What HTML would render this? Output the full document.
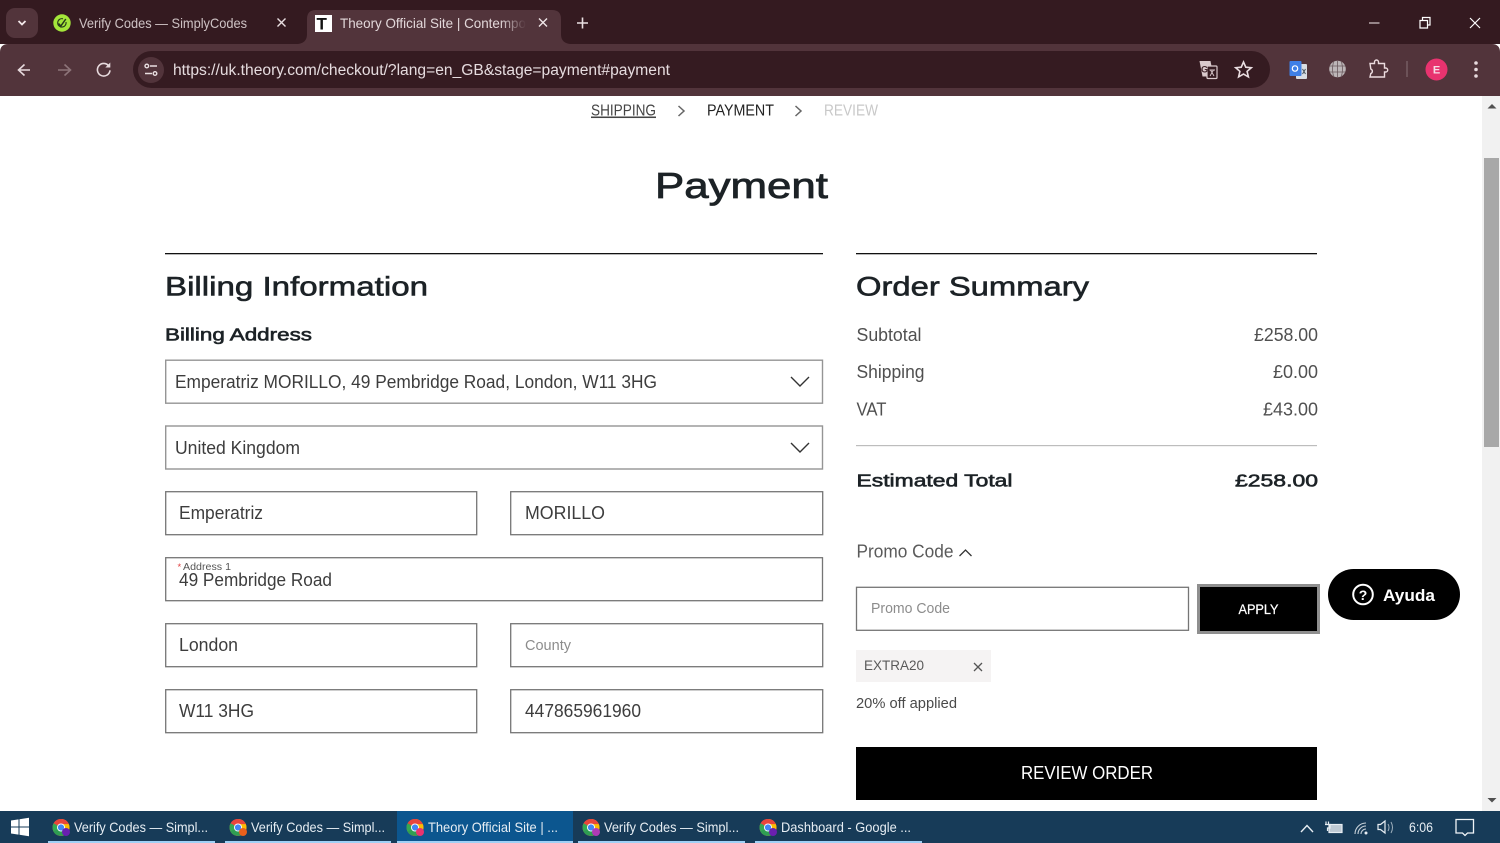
<!DOCTYPE html>
<html lang="en"><head><meta charset="utf-8"><title>Payment</title>
<style>
html,body{margin:0;padding:0;width:1500px;height:843px;overflow:hidden;background:#fff}
svg{display:block}
text{font-family:"Liberation Sans",sans-serif;white-space:pre}
.t{fill:#e3d8da;font-size:14px}
.b{fill:#3d3d3d;font-size:18px}
.h{fill:#1c2226;stroke:#1c2226;stroke-width:.6px}
.tb{fill:#e6edf3;font-size:14px}
.box{fill:#fff;stroke:#757575;stroke-width:1.3}
.sel{fill:#fff;stroke:#959595;stroke-width:1.4}
</style></head><body>
<svg width="1500" height="843" viewBox="0 0 1500 843" xmlns="http://www.w3.org/2000/svg">
<defs>
<g id="chrome"><circle r="8.5" fill="#e8453c"/><path d="M0 0L-7.4-4.2A8.5 8.5 0 0 0 -4 7.5Z" fill="#34a853"/><path d="M0-8.5A8.5 8.5 0 0 1 7.4 4.2L0 0Z" fill="#fbbc05"/><path d="M-7.4 4A8.5 8.5 0 0 0 7.4 4.2L0 0Z" fill="#2f9e52"/><path d="M-7.4-4.2A8.5 8.5 0 0 1 7.8-3.4H0Z" fill="#e8453c"/><circle r="4" fill="#fff"/><circle r="3.1" fill="#4285f4"/></g>
<linearGradient id="fade" x1="0" x2="1" y1="0" y2="0"><stop offset="0" stop-color="#52343b" stop-opacity="0"/><stop offset="1" stop-color="#52343b"/></linearGradient>
</defs>
<rect width="1500" height="843" fill="#fff"/>

<!-- Chrome title bar -->
<rect width="1500" height="44" fill="#341a20"/>
<rect x="6" y="8" width="32" height="30" rx="9" fill="#52343b"/>
<path d="M18.500 21l3.500 3.500 3.500-3.500" fill="none" stroke="#f3e8ea" stroke-width="1.800"/>
<circle cx="62" cy="23" r="8.700" fill="#a4e63a"/>
<path d="M58.500 23.500l2.300 2.500 5-7" fill="none" stroke="#26391a" stroke-width="1.500"/><path d="M66 22a4.200 4.200 0 1 1-3-3.200" fill="none" stroke="#26391a" stroke-width="1.100"/>
<text class="t" x="79" y="28" textLength="168" lengthAdjust="spacingAndGlyphs" fill-opacity=".88">Verify Codes — SimplyCodes</text>
<path d="M277.500 18.500l8 8m0-8l-8 8" stroke="#e9dfe1" stroke-width="1.400"/>
<path d="M296 44c8 0 11-4 11-10V19c0-6 3-9 9-9h236c6 0 9 3 9 9v15c0 6 3 10 11 10Z" fill="#52343b"/>
<rect x="315" y="15" width="17" height="17" fill="#fff"/>
<text x="316.500" y="29.500" style="font-size:17px;font-weight:bold;fill:#111">T</text>
<text class="t" x="340" y="28" textLength="186" lengthAdjust="spacingAndGlyphs">Theory Official Site | Contempo</text>
<rect x="500" y="12" width="26" height="24" fill="url(#fade)"/>
<path d="M539 18.500l8 8m0-8l-8 8" stroke="#f0e6e8" stroke-width="1.400"/>
<path d="M582.500 17.500v11m-5.500-5.500h11" stroke="#e9dfe1" stroke-width="1.600"/>
<path d="M1369 23h10.500" stroke="#d8ccce" stroke-width="1.200"/>
<path d="M1420 20.500h7.500v7.500h-7.500Z" fill="none" stroke="#fff" stroke-width="1.200"/><path d="M1422.500 20v-2.500h7.500v7.500h-2.500" fill="none" stroke="#fff" stroke-width="1.200"/>
<path d="M1470 18l10 10m0-10l-10 10" stroke="#fff" stroke-width="1.200"/>

<!-- Toolbar -->
<path d="M0 96V52c0-5 3-8 8-8h288v0h286h910c5 0 8 3 8 8v44Z" fill="#52343b"/>
<rect x="133" y="51" width="1137" height="37" rx="18.500" fill="#351b21"/>
<circle cx="151" cy="70" r="13" fill="#52343b"/>
<path d="M18 70h12m-5.500-5.500l-6 5.500 6 5.500" fill="none" stroke="#e7dadd" stroke-width="1.600"/>
<path d="M58 70h12m-5.500-5.500l6 5.500-6 5.500" fill="none" stroke="#8d7479" stroke-width="1.600"/>
<path d="M109 66.300a6.300 6.300 0 1 0 1 4" fill="none" stroke="#e7dadd" stroke-width="1.600"/><path d="M110.300 62.500v5h-5Z" fill="#e7dadd"/>
<g fill="none" stroke="#e9dfe1" stroke-width="1.400"><path d="M150 66h7M145 73.500h7"/><circle cx="146.800" cy="66" r="1.800"/><circle cx="155" cy="73.500" r="1.800"/></g>
<text x="173" y="75" textLength="497" lengthAdjust="spacingAndGlyphs" style="font-size:15.500px;fill:#e6dcdf">https://uk.theory.com/checkout/?lang=en_GB&amp;stage=payment#payment</text>
<!-- translate -->
<path d="M1199.500 61h11l3 15.500h-11Z" fill="#d9c9cc"/><rect x="1207" y="66" width="10" height="12.500" rx="1" fill="#351b21" stroke="#d9c9cc" stroke-width="1.200"/>
<text x="1201" y="72.500" style="font-size:9px;font-weight:bold;fill:#44292f">G</text>
<path d="M1209.500 70h5.500m-4.500 0l3.500 6m-.5-6l-3.500 6" stroke="#d9c9cc" stroke-width=".9" fill="none"/>
<path d="M1243.500 62l2.300 5.200 5.500.5-4.200 3.700 1.300 5.500-4.900-2.900-4.900 2.900 1.300-5.500-4.200-3.700 5.500-.5Z" fill="none" stroke="#e9dde0" stroke-width="1.600"/>
<rect x="1296" y="64" width="11" height="15" rx="1" fill="#d9dde3"/><rect x="1289.500" y="61" width="12" height="15" rx="1" fill="#3f7fe6"/>
<circle cx="1295" cy="68.500" r="2.700" fill="none" stroke="#fff" stroke-width="1.200"/><path d="M1302.500 69l3 5m0-5l-3 5" stroke="#46535e" stroke-width="1"/>
<circle cx="1337.500" cy="69" r="8.300" fill="#bdb6b8"/><path d="M1329.500 66h16M1329.500 72h16M1337.500 61v16M1333.500 62q-2 7 0 14M1341.500 62q2 7 0 14" fill="none" stroke="#6b5a5e" stroke-width=".8"/>
<path d="M1370 63.500h4.500v-1.500a2 2 0 0 1 4 0v1.500h6v4.500h1.200a2 2 0 0 1 0 4h-1.200v5h-14.500l.8-3.500a2.400 2.400 0 0 0 0-4.500Z" fill="none" stroke="#ecdcdf" stroke-width="1.400"/>
<path d="M1407 61v16" stroke="#7a6268" stroke-width="1.300"/>
<circle cx="1436.500" cy="69.500" r="11" fill="#e8336f"/>
<text x="1436.500" y="73.500" text-anchor="middle" style="font-size:11px;fill:#f7dce6;font-weight:bold">E</text>
<g fill="#e7dadd"><circle cx="1476" cy="63" r="1.800"/><circle cx="1476" cy="69.500" r="1.800"/><circle cx="1476" cy="76" r="1.800"/></g>

<!-- Scrollbar -->
<rect x="1482" y="96" width="18" height="715" fill="#f1f1f1"/>
<rect x="1484" y="158" width="15" height="289" fill="#a8a8a8"/>
<path d="M1487.500 108.500l4.500-4.500 4.500 4.500Z" fill="#505050"/>
<path d="M1487.500 798l4.500 4.500 4.500-4.500Z" fill="#505050"/>

<!-- Breadcrumb -->
<text x="591" y="115.500" textLength="65" lengthAdjust="spacingAndGlyphs" style="font-size:15.500px;fill:#444" text-decoration="underline">SHIPPING</text>
<path d="M678.500 106l5.500 5-5.500 5" fill="none" stroke="#666" stroke-width="1.500"/>
<text x="707" y="115.500" textLength="67" lengthAdjust="spacingAndGlyphs" style="font-size:15.500px;fill:#222">PAYMENT</text>
<path d="M795.500 106l5.500 5-5.500 5" fill="none" stroke="#666" stroke-width="1.500"/>
<text x="824" y="115.500" textLength="54" lengthAdjust="spacingAndGlyphs" style="font-size:15.500px;fill:#c8c8c8">REVIEW</text>

<text class="h" x="655" y="198" textLength="173" lengthAdjust="spacingAndGlyphs" style="font-size:36px;stroke-width:.8px">Payment</text>

<!-- Billing -->
<rect x="165" y="253" width="658" height="1.300" fill="#111"/>
<text class="h" x="165" y="295.500" textLength="263" lengthAdjust="spacingAndGlyphs" style="font-size:27px">Billing Information</text>
<text class="h" x="165" y="340.500" textLength="147" lengthAdjust="spacingAndGlyphs" style="font-size:17.500px;stroke-width:.6px">Billing Address</text>

<rect class="sel" x="165.700" y="360.200" width="656.800" height="43"/>
<text class="b" x="175" y="388" textLength="482" lengthAdjust="spacingAndGlyphs">Emperatriz MORILLO, 49 Pembridge Road, London, W11 3HG</text>
<path d="M791 377l9 9 9-9" fill="none" stroke="#333" stroke-width="1.400"/>

<rect class="sel" x="165.700" y="426" width="656.800" height="43"/>
<text class="b" x="175" y="454" textLength="125" lengthAdjust="spacingAndGlyphs">United Kingdom</text>
<path d="M791 443l9 9 9-9" fill="none" stroke="#333" stroke-width="1.400"/>

<rect class="box" x="165.700" y="491.700" width="311" height="43"/>
<text class="b" x="179" y="519" textLength="84" lengthAdjust="spacingAndGlyphs">Emperatriz</text>
<rect class="box" x="510.700" y="491.700" width="312" height="43"/>
<text class="b" x="525" y="519" textLength="80" lengthAdjust="spacingAndGlyphs">MORILLO</text>

<rect class="box" x="165.700" y="557.700" width="656.800" height="43"/>
<text x="177.500" y="570" style="font-size:9.500px;fill:#e04040">*</text>
<text x="183" y="570" textLength="48" lengthAdjust="spacingAndGlyphs" style="font-size:10px;fill:#555">Address 1</text>
<text class="b" x="179" y="586" textLength="153" lengthAdjust="spacingAndGlyphs">49 Pembridge Road</text>

<rect class="box" x="165.700" y="623.700" width="311" height="43"/>
<text class="b" x="179" y="651" textLength="59" lengthAdjust="spacingAndGlyphs">London</text>
<rect class="box" x="510.700" y="623.700" width="312" height="43"/>
<text x="525" y="650" textLength="46" lengthAdjust="spacingAndGlyphs" style="font-size:15px;fill:#8c8c8c">County</text>

<rect class="box" x="165.700" y="689.700" width="311" height="43"/>
<text class="b" x="179" y="717" textLength="75" lengthAdjust="spacingAndGlyphs">W11 3HG</text>
<rect class="box" x="510.700" y="689.700" width="312" height="43"/>
<text class="b" x="525" y="717" textLength="116" lengthAdjust="spacingAndGlyphs">447865961960</text>

<!-- Order Summary -->
<rect x="856" y="253" width="461" height="1.300" fill="#111"/>
<text class="h" x="856" y="295.500" textLength="233" lengthAdjust="spacingAndGlyphs" style="font-size:27px">Order Summary</text>
<text class="b" x="856.500" y="341" textLength="65" lengthAdjust="spacingAndGlyphs" style="fill:#505050">Subtotal</text>
<text class="b" x="1254" y="341" textLength="64" lengthAdjust="spacingAndGlyphs" style="fill:#505050">£258.00</text>
<text class="b" x="856.500" y="378" textLength="68" lengthAdjust="spacingAndGlyphs" style="fill:#505050">Shipping</text>
<text class="b" x="1273" y="378" textLength="45" lengthAdjust="spacingAndGlyphs" style="fill:#505050">£0.00</text>
<text class="b" x="856.500" y="415.500" textLength="30" lengthAdjust="spacingAndGlyphs" style="fill:#505050">VAT</text>
<text class="b" x="1263" y="415.500" textLength="55" lengthAdjust="spacingAndGlyphs" style="fill:#505050">£43.00</text>
<rect x="856" y="445" width="461" height="1.200" fill="#bdbdbd"/>
<text class="h" x="856.500" y="486.500" textLength="156" lengthAdjust="spacingAndGlyphs" style="font-size:17.500px">Estimated Total</text>
<text class="h" x="1235" y="486.500" textLength="83" lengthAdjust="spacingAndGlyphs" style="font-size:17.500px">£258.00</text>

<text class="b" x="856.500" y="557.500" textLength="97" lengthAdjust="spacingAndGlyphs" style="fill:#5a5a5a">Promo Code</text>
<path d="M959.500 556l6-6 6 6" fill="none" stroke="#333" stroke-width="1.300"/>

<rect class="box" x="856.500" y="587.300" width="332" height="43"/>
<text x="871" y="613" textLength="79" lengthAdjust="spacingAndGlyphs" style="font-size:15px;fill:#8c8c8c">Promo Code</text>
<rect x="1198.500" y="585.500" width="120" height="47" fill="#000" stroke="#8f8f8f" stroke-width="3"/>
<text x="1238.500" y="614" textLength="40" lengthAdjust="spacingAndGlyphs" style="font-size:14px;fill:#fff;stroke:#fff;stroke-width:.25px">APPLY</text>

<rect x="856" y="650" width="135" height="32" fill="#f5f3f3"/>
<text x="864" y="670" textLength="60" lengthAdjust="spacingAndGlyphs" style="font-size:14px;fill:#5a5a5a">EXTRA20</text>
<path d="M974 663l8 8m0-8l-8 8" stroke="#555" stroke-width="1.300"/>
<text x="856" y="708" textLength="101" lengthAdjust="spacingAndGlyphs" style="font-size:14.500px;fill:#4a4a4a">20% off applied</text>

<rect x="856" y="747" width="461" height="53" fill="#000"/>
<text x="1021" y="779" textLength="132" lengthAdjust="spacingAndGlyphs" style="font-size:18.500px;fill:#fff">REVIEW ORDER</text>

<!-- Ayuda -->
<rect x="1328" y="569" width="132" height="51" rx="25.500" fill="#000"/>
<circle cx="1363" cy="594.500" r="9.800" fill="none" stroke="#fff" stroke-width="2"/>
<text x="1363" y="600" text-anchor="middle" style="font-size:14px;font-weight:bold;fill:#fff">?</text>
<text x="1383" y="601" textLength="52" lengthAdjust="spacingAndGlyphs" style="font-size:17px;font-weight:bold;fill:#fff">Ayuda</text>

<!-- Taskbar -->
<rect y="811" width="1500" height="32" fill="#173b58"/>
<rect x="397" y="811" width="176" height="32" fill="#0c568f"/>
<g fill="#fff"><path d="M11 820.500l7.500-1.100v7.100H11Z"/><path d="M19.500 819.200l9.500-1.400v8.700h-9.500Z"/><path d="M11 827.500h7.500v7.100l-7.500-1.100Z"/><path d="M19.500 827.500H29v8.700l-9.500-1.400Z"/></g>
<g fill="#9fd0f5"><rect x="48" y="841" width="167" height="2"/><rect x="225" y="841" width="166" height="2"/><rect x="397" y="841" width="176" height="2"/><rect x="578" y="841" width="167" height="2"/><rect x="755" y="841" width="167" height="2"/></g>
<use href="#chrome" x="61" y="827.500"/><circle cx="66" cy="832" r="4" fill="#6a1fb0"/>
<text class="tb" x="74" y="832" textLength="134" lengthAdjust="spacingAndGlyphs">Verify Codes — Simpl...</text>
<use href="#chrome" x="238" y="827.500"/><circle cx="243" cy="832" r="4" fill="#e8601c"/>
<text class="tb" x="251" y="832" textLength="134" lengthAdjust="spacingAndGlyphs">Verify Codes — Simpl...</text>
<use href="#chrome" x="415" y="827.500"/><circle cx="420" cy="832" r="4" fill="#e8336f"/>
<text class="tb" x="428" y="832" textLength="130" lengthAdjust="spacingAndGlyphs">Theory Official Site | ...</text>
<use href="#chrome" x="591" y="827.500"/><circle cx="596" cy="832" r="4" fill="#b03ab5"/>
<text class="tb" x="604" y="832" textLength="135" lengthAdjust="spacingAndGlyphs">Verify Codes — Simpl...</text>
<use href="#chrome" x="768" y="827.500"/><circle cx="773" cy="832" r="4" fill="#6a1fb0"/>
<text class="tb" x="781" y="832" textLength="130" lengthAdjust="spacingAndGlyphs">Dashboard - Google ...</text>

<path d="M1301 832l6-6.500 6 6.500" fill="none" stroke="#e8eef3" stroke-width="1.400"/>
<g fill="none" stroke="#e8eef3" stroke-width="1.200"><rect x="1329" y="824.500" width="13" height="8" fill="#e8eef3" fill-opacity=".8"/><path d="M1326 821.500v3m2.500-3v3M1325 824.500h5v3.500h-2.500v3"/></g>
<path d="M1355 834a11 11 0 0 1 11-11M1358 834a8 8 0 0 1 8-8M1361 834a5 5 0 0 1 5-5" fill="none" stroke="#c8d2da" stroke-width="1.100"/><circle cx="1366" cy="833" r="1.500" fill="#e8eef3"/>
<path d="M1378 824.500v5h2.500l4.500 3.500v-12l-4.500 3.500Z" fill="none" stroke="#e8eef3" stroke-width="1.200"/>
<path d="M1388 824q2 3.500 0 7M1391 822q3 5.500 0 11" fill="none" stroke="#9fb0bd" stroke-width="1"/>
<text class="tb" x="1409" y="832" textLength="24" lengthAdjust="spacingAndGlyphs" style="font-size:13.500px">6:06</text>
<path d="M1456 819.500h17.500v13.500h-6l-2.500 2.500-2.500-2.500H1456Z" fill="none" stroke="#f0f4f7" stroke-width="1.300"/>
</svg>
</body></html>
